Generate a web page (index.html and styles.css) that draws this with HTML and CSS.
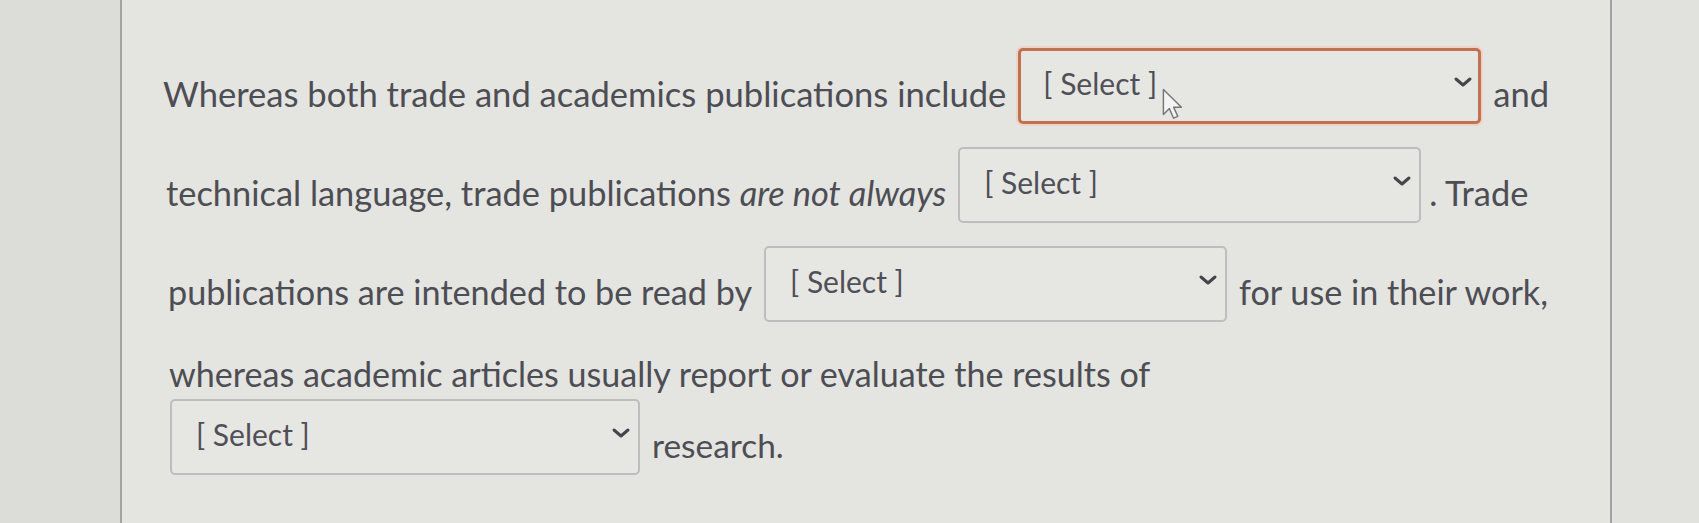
FILE: index.html
```html
<!DOCTYPE html>
<html lang="en">
<head>
<meta charset="utf-8">
<title>Quiz question</title>
<link rel="stylesheet" href="styles.css">
</head>
<body>
<div class="page">
  <div class="gutter gutter-left"></div>
  <main class="panel">
    <div class="question">
      <div class="row row-1">
        <span class="txt">Whereas both trade and academics publications include</span>
        <div class="dd dd-focus">
          <span class="dd-label">[ Select ]</span>
          <svg class="chev" viewBox="0 0 20 12" width="20" height="12"><polyline points="3,3 10,9 17,3"/></svg>
          <svg class="cursor" viewBox="0 0 20 30" width="24" height="36"><path d="M2 2 L2 23 L7 18 L10.5 26 L14 24.5 L10.5 16.8 L17 16.8 Z"/></svg>
        </div>
        <span class="txt">and</span>
      </div>
      <div class="row row-2">
        <span class="txt">technical language, trade publications <em>are not always</em></span>
        <div class="dd">
          <span class="dd-label">[ Select ]</span>
          <svg class="chev" viewBox="0 0 20 12" width="20" height="12"><polyline points="3,3 10,9 17,3"/></svg>
        </div>
        <span class="txt tight">. Trade</span>
      </div>
      <div class="row row-3">
        <span class="txt">publications are intended to be read by</span>
        <div class="dd">
          <span class="dd-label">[ Select ]</span>
          <svg class="chev" viewBox="0 0 20 12" width="20" height="12"><polyline points="3,3 10,9 17,3"/></svg>
        </div>
        <span class="txt">for use in their work,</span>
      </div>
      <div class="row row-4">
        <span class="txt">whereas academic articles usually report or evaluate the results of</span>
      </div>
      <div class="row row-5">
        <div class="dd dd-wide">
          <span class="dd-label">[ Select ]</span>
          <svg class="chev" viewBox="0 0 20 12" width="20" height="12"><polyline points="3,3 10,9 17,3"/></svg>
        </div>
        <span class="txt">research.</span>
      </div>
    </div>
  </main>
  <div class="gutter gutter-right"></div>
</div>
</body>
</html>
```

FILE: styles.css
```css
* { box-sizing: border-box; }

html, body {
  margin: 0;
  padding: 0;
  background: #dfdfdc;
}

body {
  font-family: Lato, "Open Sans", "Liberation Sans", sans-serif;
  color: #4d4d54;
}

.page {
  display: flex;
  width: 1699px;
  height: 523px;
  overflow: hidden;
}

.gutter-left {
  width: 120px;
  flex: none;
  background: #dcdcd9;
}

.gutter-right {
  flex: 1;
  background: #e1e1de;
}

.panel {
  width: 1492px;
  flex: none;
  background: #e4e4e1;
  border-left: 2px solid #a3a3a3;
  border-right: 2px solid #a3a3a3;
  padding: 48px 0 0 41px;
}

.question {
  display: flex;
  flex-direction: column;
  gap: 24px;
}

.row {
  display: flex;
  align-items: center;
  gap: 12px;
  height: 75px;
  font-size: 34.6px;
}

.row-2 { padding-left: 3px; font-size: 34.4px; }
.row-3 { padding-left: 5px; font-size: 34.2px; }
.row-4 { padding-left: 6px; font-size: 34.1px; height: 40px; margin-top: 9px; margin-bottom: -19px; align-items: flex-start; }
.row-5 { padding-left: 7px; font-size: 33.4px; }

.txt {
  line-height: 40px;
  padding-top: 16px;
  white-space: nowrap;
}

.row-4 .txt { padding-top: 0; }

.txt em { font-style: italic; }

.tight { margin-left: -4px; }

.dd {
  position: relative;
  flex: none;
  width: 463px;
  height: 76px;
  display: flex;
  align-items: center;
  justify-content: space-between;
  padding: 0 7px 0 24px;
  border: 2px solid #bdbdbb;
  border-radius: 5px;
  background: #e6e6e3;
}

.dd-wide { width: 470px; }

.dd-focus {
  border: 3px solid #c17150;
  box-shadow: 0 0 0 2px #ecd3c6;
  padding-left: 22px;
  padding-right: 5px;
}

.dd-label {
  font-size: 30px;
  color: #4f4f57;
  margin-top: -6px;
}

.chev {
  margin-top: -8px;
  fill: none;
  stroke: #45454c;
  stroke-width: 3;
  stroke-linecap: round;
  stroke-linejoin: round;
}

.cursor {
  position: absolute;
  left: 140px;
  top: 36px;
  fill: #f4f4f2;
  stroke: #76767c;
  stroke-width: 1.2;
  stroke-linejoin: round;
}
```
